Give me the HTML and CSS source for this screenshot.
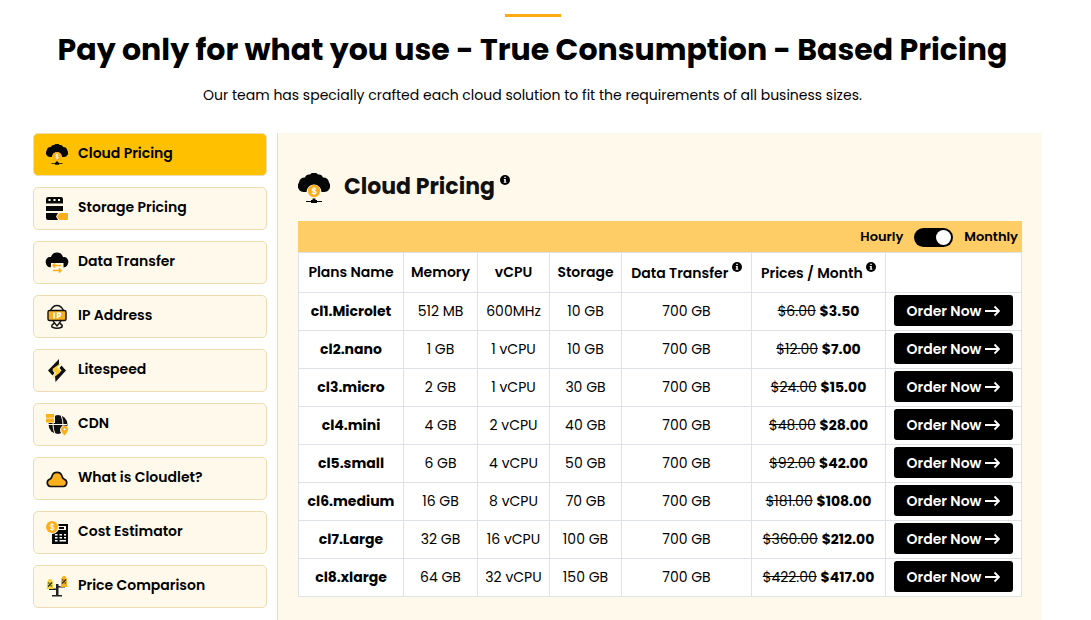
FILE: index.html
```
<!DOCTYPE html>
<html lang="en">
<head>
    <meta charset="UTF-8">
    <meta name="viewport" content="width=device-width, initial-scale=1.0">
    <title>Cloud Pricing</title>
    <link rel="stylesheet" href="styles.css">
</head>
<body>
    <svg class="symbols" aria-hidden="true">
        <symbol id="cloud-price" viewBox="0 0 32 32">
            <path d="M6 19A6 6 0 0 1 1 9.500a6 6 0 0 1 6-5 4.500 4.500 0 0 1 5-3 5 5 0 0 1 8 0 4.500 4.500 0 0 1 5 3 6 6 0 0 1 6 5A6 6 0 0 1 26 19h-2.500a7.500 7.500 0 0 0-15 0z" fill="#060807"/>
            <circle cx="16" cy="18" r="6.200" fill="#fbaf1c"/>
            <path d="M18 16.500c-.3-1.300-3.800-1.400-3.800.3 0 1.800 3.800.8 3.800 2.700 0 1.700-3.600 1.500-4 .2M16 14v8" fill="none" stroke="#fff" stroke-width="1.200"/>
            <path d="M14.500 25.500h3V27H19v1h5v1h-5v1h-6v-1H8v-1h5v-1h1.500z" fill="#060807"/>
        </symbol>
        <symbol id="info" viewBox="0 0 10 10">
            <circle cx="5" cy="5" r="5" fill="#000"/>
            <path d="M4.300 1.800h1.500v1.300H4.300zM3.800 4.100h2v2.700h.6v1H3.700v-1h.6V5h-.5z" fill="#fff"/>
        </symbol>
        <symbol id="arrow" viewBox="0 0 15 12">
            <path d="M0 6h14M9.500 1.500L14 6l-4.500 4.500" fill="none" stroke="#fff" stroke-width="1.800"/>
        </symbol>
    </svg>

    <div class="container">
        <div class="heading">
            <h1>Pay only for what you use - True Consumption - Based Pricing</h1>
            <p>Our team has specially crafted each cloud solution to fit the requirements of all business sizes.</p>
        </div>

        <div class="row">
            <div class="tabs">
                <button type="button" class="tab active">
                    <svg><use href="#cloud-price"/></svg>Cloud Pricing
                </button>
                <button type="button" class="tab">
                    <svg viewBox="0 0 22 22">
                        <path d="M2-1h13q2 0 2 2v4.500H0V1q0-2 2-2zM0 8h17v5H0zM0 15h12l-2 3.500 2 3.500H2q-2 0-2-2z" fill="#060807"/>
                        <path d="M2.500 1h2v2h-2zM7.500 1h2v2h-2zM12 1h2v2h-2z" fill="#fff"/>
                        <path d="M14 15h7q1 0 1 1v5q0 1-1 1h-7q-2-1-3-3.500Q12 16 14 15z" fill="#fbaf1c"/>
                    </svg>Storage Pricing
                </button>
                <button type="button" class="tab">
                    <svg viewBox="0 0 22 22">
                        <path d="M4.500 15.500A5.500 5.500 0 0 1 3 5h2a6.300 6.300 0 0 1 12 0h2a5.500 5.500 0 0 1-1.500 10.500V11H5v3z" fill="#060807"/>
                        <path d="M6 13.500l3-2.500v2h6v1H9v2zM16 18.500L13 16v2H7v1h6v2z" fill="#fbaf1c" stroke="#fbaf1c" stroke-width=".5"/>
                    </svg>Data Transfer
                </button>
                <button type="button" class="tab">
                    <svg viewBox="0 0 22 22">
                        <path d="M4.500 4.500Q7-.5 11-.5t6.500 5M7 15l4 5 4-5M8 17.500q-3 1.500-2 3.500 5 2.500 10 0 1-2-2-3.500" fill="none" stroke="#111" stroke-width="1.400"/>
                        <rect x="2" y="4.500" width="18" height="10" rx="1.500" fill="#fbaf1c" stroke="#111" stroke-width="1.400"/>
                        <path d="M8 6.500v6M11.500 12.500V7h1.500q1.500 0 1.500 1.500T13 10.200h-1.500" fill="none" stroke="#fff" stroke-width="1.600"/>
                    </svg>IP Address
                </button>
                <button type="button" class="tab">
                    <svg viewBox="0 0 22 22">
                        <path d="M13-1L2 10.500l4.500 5 2-2.500-2-2.500L13 5zM9.500 22L20 10.500l-4.500-5-2 2.500 2 2.500L9 16.500z" fill="#111"/>
                        <path d="M16 2L7 8.500Q6 10 7.500 11l2.500 2-4.500 6 8.500-6.500q1-1.500-.5-3L11 7.500z" fill="#fccb2d"/>
                    </svg>Litespeed
                </button>
                <button type="button" class="tab">
                    <svg viewBox="0 0 22 22">
                        <circle cx="12" cy="10.500" r="9.500" fill="#111"/>
                        <path d="M2 10.500h19M9 1q-4 9.500 0 19M15 1q4 9.500 0 19" fill="none" stroke="#fff9eb"/>
                        <path d="M-1-1h10v10h-10z" fill="#fff9eb"/>
                        <circle cx="18.500" cy="16" r="4.500" fill="#fff9eb"/>
                        <path d="M0 0h8v3.800H0zM0 4.600h8v3.800H0zM18.500 21.500q-3.500-3.500-3.500-6a3.500 3.500 0 0 1 7 0q0 2.500-3.500 6z" fill="#fbaf1c"/>
                        <circle cx="18.500" cy="15.300" r="1" fill="#fff"/>
                    </svg>CDN
                </button>
                <button type="button" class="tab">
                    <svg viewBox="0 0 22 22">
                        <path d="M4.500 18.500a3.800 3.800 0 0 1-.8-7.300q1.800-.7 2.300-3a5.200 5.200 0 0 1 10 0q.5 2.300 2.300 3a3.800 3.800 0 0 1-.8 7.300z" fill="#fbaf1c" stroke="#111" stroke-width="1.700"/>
                    </svg>What is Cloudlet?
                </button>
                <button type="button" class="tab">
                    <svg viewBox="0 0 22 22">
                        <path d="M7 2h15v20H6V10z" fill="#060807"/>
                        <path d="M12 4h8v4h-8z" fill="#fff9eb"/>
                        <path d="M13 5h5v2h-5z" fill="#060807"/>
                        <path d="M9 12h2.500v1.500H9zM13.500 12H16v1.500h-2.500zM18 12h2v1.500h-2zM9 15h2.500v1.500H9zM13.500 15H16v1.500h-2.500zM18 15h2v1.500h-2zM9 18h2.500v1.500H9zM13.500 18H20v1.500h-6.500z" fill="#fff"/>
                        <circle cx="6" cy="5" r="7" fill="#fff9eb"/>
                        <circle cx="6" cy="5" r="6" fill="#fbaf1c"/>
                        <path d="M8 3.300C7.500 2 4 2 4 3.700c0 2 4 .8 4 2.700C8 8 4.500 8 4 6.700M6 1v8" fill="none" stroke="#fff"/>
                    </svg>Cost Estimator
                </button>
                <button type="button" class="tab">
                    <svg viewBox="0 0 22 22">
                        <path d="M10 8h2.500v2H19v1.500h-6.500v7.500H16v1.500H6V19h4v-5H3v-1.500h7z" fill="#222"/>
                        <path d="M1 6l2-3h2l2 3v6l1 1H0l1-1z" fill="#f1d63b"/>
                        <path d="M15 3l2-3h2l2 3v7l1 1h-8l1-1z" fill="#fbaf1c"/>
                        <path d="M2 7h1.500M4.500 10H6M6 6.500l-4 4M16 4h1.500M18.500 7H20M20 3.500l-4 4" stroke="#222" stroke-width="1.200"/>
                    </svg>Price Comparison
                </button>
            </div>

            <div class="panel">
                <h2>
                    <svg class="title-icon"><use href="#cloud-price"/></svg>
                    <span>Cloud Pricing <svg class="info"><use href="#info"/></svg></span>
                </h2>

                <div class="billing">
                    <span>Hourly</span>
                    <input type="checkbox" id="billing_mode" class="switch" checked>
                    <label for="billing_mode">Monthly</label>
                </div>

                <table>
                    <colgroup>
                        <col class="col-name">
                        <col class="col-memory">
                        <col class="col-cpu">
                        <col class="col-storage">
                        <col class="col-transfer">
                        <col class="col-price">
                        <col class="col-order">
                    </colgroup>
                    <thead>
                        <tr>
                            <th>Plans Name</th>
                            <th>Memory</th>
                            <th>vCPU</th>
                            <th>Storage</th>
                            <th>Data Transfer <svg class="info"><use href="#info"/></svg></th>
                            <th>Prices / Month <svg class="info"><use href="#info"/></svg></th>
                            <th></th>
                        </tr>
                    </thead>
                    <tbody id="tableBody"></tbody>
                </table>
            </div>
        </div>
    </div>
    <script src="script.js"></script>
</body>
</html>
```
FILE: styles.css
```
*{
    box-sizing: border-box;
}
body{
    margin: 0;
    background-color: #fff;
    color: #000;
    font-family: Poppins, Inter, "Open Sans", sans-serif;
    font-size: 14px;
}
h1, h2, p{
    margin: 0;
}
.symbols{
    display: none;
}
.container{
    padding: 14px 49px 0 23px;
}

/* Heading */
.heading{
    text-align: center;
}
.heading::before{
    content: "";
    display: block;
    width: 56px;
    height: 3px;
    margin: 0 auto 13px;
    background-color: #ffac14;
}
.heading h1{
    font-size: 30px;
    line-height: 40px;
    font-weight: 700;
}
.heading p{
    margin: 13px 0 26px;
    line-height: 24px;
}

.row{
    display: flex;
}

/* Left tabs */
.tabs{
    flex: 0 0 254px;
    display: flex;
    flex-direction: column;
    gap: 11px;
    padding: 0 10px;
}
.tab{
    display: flex;
    align-items: center;
    gap: 10px;
    height: 43px;
    padding: 0 12px 2px;
    border: 1px solid #ecdcb0;
    border-radius: 5px;
    background-color: #fff9eb;
    color: #000;
    font: inherit;
    font-weight: 600;
}
.tab svg{
    width: 22px;
    height: 22px;
    margin-top: 2px;
    overflow: visible;
}
.tab.active{
    background-color: #ffc000;
}

/* Right panel */
.panel{
    flex: 1;
    padding: 36px 20px 23px;
    border-left: 1px solid #ecdcb0;
    background-color: #fff9eb;
}
.panel h2{
    display: flex;
    align-items: center;
    gap: 14px;
    height: 34px;
    margin-bottom: 18px;
    color: #111;
    font-size: 22px;
    font-weight: 700;
}
.title-icon{
    width: 32px;
    height: 32px;
    margin-top: 6px;
}
.info{
    width: 10px;
    height: 10px;
    vertical-align: super;
}
.billing{
    display: flex;
    align-items: center;
    justify-content: flex-end;
    gap: 11px;
    height: 31px;
    padding-right: 4px;
    background-color: #ffcd65;
    font-size: 13px;
    font-weight: 600;
}
.switch{
    appearance: none;
    display: flex;
    align-items: center;
    width: 39px;
    height: 19px;
    margin: 2px 0 0;
    padding: 2px;
    border-radius: 10px;
    background-color: #000;
}
.switch::before{
    content: "";
    width: 15px;
    height: 15px;
    border-radius: 50%;
    background-color: #fff;
}
.switch:checked{
    justify-content: flex-end;
}

/* Plans table */
table{
    width: 100%;
    table-layout: fixed;
    border-collapse: collapse;
    background-color: #fff;
    text-align: center;
    white-space: nowrap;
}
th, td{
    height: 38px;
    padding: 0;
    border: 1px solid #dee2e6;
}
th{
    height: 40px;
    font-weight: 600;
}
.col-name{
    width: 105px;
}
.col-memory{
    width: 74px;
}
.col-cpu, .col-storage{
    width: 72px;
}
.col-transfer{
    width: 130px;
}
.col-price{
    width: 134px;
}
td b{
    font-weight: 700;
}
.order{
    display: flex;
    align-items: center;
    justify-content: center;
    gap: 4px;
    height: 31px;
    margin: 0 8px 2px;
    padding-top: 2px;
    border-radius: 3px;
    background-color: #000;
    color: #fff;
    font-weight: 600;
    text-decoration: none;
}
.order svg{
    width: 15px;
    height: 12px;
    margin-bottom: 2px;
}
```
FILE: script.js
```
const plans = [
    ['cl1.Microlet', '512 MB', '600MHz', '10 GB', '$6.00', '$3.50'],
    ['cl2.nano', '1 GB', '1 vCPU', '10 GB', '$12.00', '$7.00'],
    ['cl3.micro', '2 GB', '1 vCPU', '30 GB', '$24.00', '$15.00'],
    ['cl4.mini', '4 GB', '2 vCPU', '40 GB', '$48.00', '$28.00'],
    ['cl5.small', '6 GB', '4 vCPU', '50 GB', '$92.00', '$42.00'],
    ['cl6.medium', '16 GB', '8 vCPU', '70 GB', '$181.00', '$108.00'],
    ['cl7.Large', '32 GB', '16 vCPU', '100 GB', '$360.00', '$212.00'],
    ['cl8.xlarge', '64 GB', '32 vCPU', '150 GB', '$422.00', '$417.00']
];

const tableBody = document.getElementById('tableBody');

plans.forEach(plan => {
    const row = document.createElement('tr');
    row.innerHTML = `
        <td><b>${plan[0]}</b></td>
        <td>${plan[1]}</td>
        <td>${plan[2]}</td>
        <td>${plan[3]}</td>
        <td>700 GB</td>
        <td><s>${plan[4]}</s> <b>${plan[5]}</b></td>
        <td><a class="order" href="#">Order Now <svg><use href="#arrow"/></svg></a></td>`;
    tableBody.appendChild(row);
});
```
